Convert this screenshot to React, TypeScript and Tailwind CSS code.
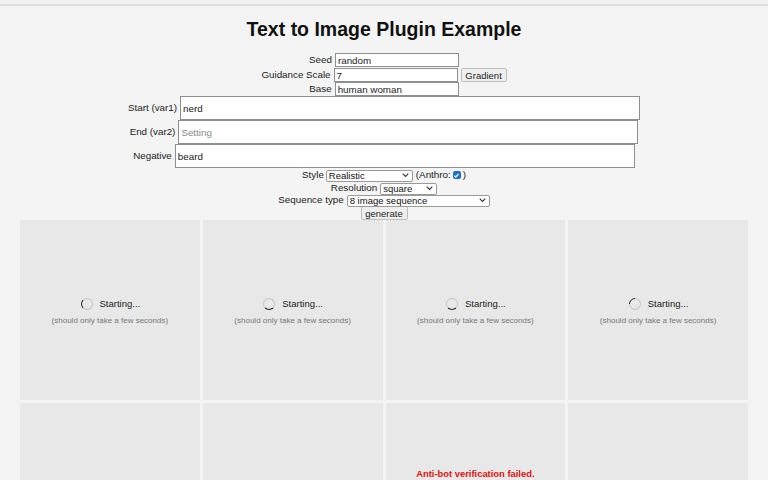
import { useState } from "react";

const Chevron = () => (
  <svg viewBox="0 0 10 6" className="w-[7px] h-[5px] absolute right-[4px] top-1/2 -translate-y-1/2 pointer-events-none">
    <path d="M1 1l4 4 4-4" fill="none" stroke="#333" strokeWidth="1.6" />
  </svg>
);

const Select = ({ width, value, options }: { width: string; value: string; options: string[] }) => (
  <span className={`relative inline-block h-full ${width}`}>
    <select
      defaultValue={value}
      className="appearance-none w-full h-full bg-white border border-[#9a9a9a] rounded-[2px] pl-[2px] text-[9.5px] leading-none text-[#111] outline-none"
    >
      {options.map((o) => (
        <option key={o}>{o}</option>
      ))}
    </select>
    <Chevron />
  </span>
);

const Spinner = ({ rot }: { rot: string }) => (
  <span
    className={`inline-block w-[12px] h-[12px] rounded-full border-[1.5px] border-[#c2c2c2] border-l-[#222] ${rot}`}
  />
);

const LoadingTile = ({ rot }: { rot: string }) => (
  <div className="bg-[#e8e8e8] h-[180px] flex flex-col items-center justify-center pt-[4px]">
    <div className="flex items-center gap-[7px] h-[12px] pl-[1px]">
      <Spinner rot={rot} />
      <span className="text-[9.5px] text-[#222]">Starting...</span>
    </div>
    <div className="mt-[6px] h-[10px] text-[8px] leading-[10px] text-[#777]">
      (should only take a few seconds)
    </div>
  </div>
);

export default function App() {
  const [anthro, setAnthro] = useState(true);

  return (
    <div className="min-h-[480px] bg-[#f4f4f4] font-['Liberation_Sans',Arial,sans-serif] text-[#222] overflow-hidden">
      <div className="h-[4px] bg-[#f1f1f1]" />
      <div className="border-t-2 border-[#dedede]" />

      <h1 className="h-[47px] flex items-center justify-center text-[19.5px] font-bold text-[#111]">
        Text to Image Plugin Example
      </h1>

      {/* form */}
      <div className="flex flex-col items-center text-[9.8px]">
        <div className="h-[14px] flex items-center gap-[3px]">
          <span>Seed</span>
          <input defaultValue="random" className="h-full w-[124px] bg-white border border-[#8f8f8f] px-[2px] text-[9.8px] outline-none" />
        </div>
        <div className="h-[15px] flex items-center gap-[3px] pt-[1px]">
          <span>Guidance Scale</span>
          <input defaultValue="7" className="h-full w-[124px] bg-white border border-[#8f8f8f] px-[2px] text-[9.8px] outline-none" />
          <button className="h-full w-[46px] bg-[#efefef] border border-[#bdbdbd] rounded-[2px] text-[9.5px] text-[#222]">
            Gradient
          </button>
        </div>
        <div className="h-[14px] flex items-center gap-[3px]">
          <span>Base</span>
          <input defaultValue="human woman" className="h-full w-[124px] bg-white border border-[#8f8f8f] px-[2px] text-[9.8px] outline-none" />
        </div>

        <div className="h-[24px] flex items-center gap-[3px]">
          <span>Start (var1)</span>
          <input defaultValue="nerd" className="h-full w-[460px] bg-white border border-[#8f8f8f] px-[2px] text-[9.8px] outline-none" />
        </div>
        <div className="h-[24px] flex items-center gap-[3px]">
          <span>End (var2)</span>
          <input placeholder="Setting" className="h-full w-[460px] bg-white border border-[#8f8f8f] px-[2px] text-[9.8px] outline-none placeholder:text-[#8a8a8a]" />
        </div>
        <div className="h-[24px] flex items-center gap-[3px]">
          <span>Negative</span>
          <input defaultValue="beard" className="h-full w-[460px] bg-white border border-[#8f8f8f] px-[2px] text-[9.8px] outline-none" />
        </div>

        <div className="h-[13px] flex items-center gap-[2px] pt-[1px]">
          <span>Style</span>
          <Select width="w-[87px]" value="Realistic" options={["Realistic", "Anime", "Painting"]} />
          <span className="ml-[1px]">(Anthro:</span>
          <button
            onClick={() => setAnthro(!anthro)}
            className={`w-[8px] h-[8px] rounded-[2px] flex items-center justify-center ${anthro ? "bg-[#1a6ed8]" : "bg-white border border-[#777]"}`}
          >
            {anthro && (
              <svg viewBox="0 0 10 10" className="w-[7px] h-[7px]">
                <path d="M2 5.2l2 2 4-4.4" fill="none" stroke="#fff" strokeWidth="1.8" />
              </svg>
            )}
          </button>
          <span>)</span>
        </div>
        <div className="h-[13px] flex items-center gap-[3px] pt-[1px]">
          <span>Resolution</span>
          <Select width="w-[57px]" value="square" options={["square", "portrait", "landscape"]} />
        </div>
        <div className="h-[12px] flex items-center gap-[3px]">
          <span>Sequence type</span>
          <Select width="w-[143px]" value="8 image sequence" options={["8 image sequence", "4 image sequence", "single image"]} />
        </div>
        <div className="h-[14px] flex items-center">
          <button className="h-full w-[47px] bg-[#efefef] border border-[#bdbdbd] rounded-[2px] text-[9.5px] text-[#222]">
            generate
          </button>
        </div>
      </div>

      {/* results */}
      <div className="px-[20px] grid grid-cols-4 gap-[3px]">
        <LoadingTile rot="rotate-0" />
        <LoadingTile rot="-rotate-90" />
        <LoadingTile rot="-rotate-90" />
        <LoadingTile rot="rotate-45" />
        <div className="bg-[#e8e8e8] h-[180px]" />
        <div className="bg-[#e8e8e8] h-[180px]" />
        <div className="bg-[#e8e8e8] h-[180px] flex flex-col items-center pt-[64px]">
          <span className="text-[9.4px] font-bold text-[#e01010]">Anti-bot verification failed.</span>
        </div>
        <div className="bg-[#e8e8e8] h-[180px]" />
      </div>
    </div>
  );
}
